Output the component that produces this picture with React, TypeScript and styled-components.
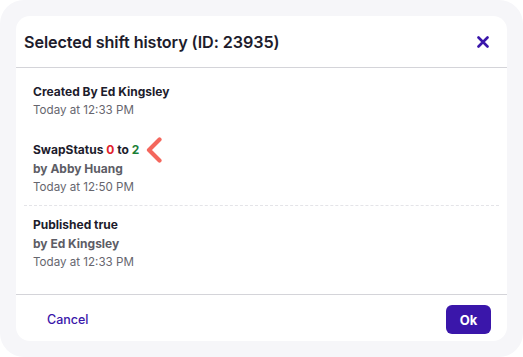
import React from "react";
import styled, { createGlobalStyle } from "styled-components";

const Global = createGlobalStyle`
  html, body { margin: 0; padding: 0; background: #ffffff; }
  body { font-family: Inter, "Noto Sans", sans-serif; -webkit-font-smoothing: antialiased; }
  * { box-sizing: border-box; }
`;

const Backdrop = styled.div`
  width: 523px;
  height: 357px;
  background: #f6f6f9;
  border-radius: 24px;
  padding: 16px;
  display: flex;
`;

const Card = styled.div`
  flex: 1;
  background: #ffffff;
  border-radius: 14px;
  display: flex;
  flex-direction: column;
  overflow: hidden;
`;

const Header = styled.div`
  height: 52px;
  display: flex;
  align-items: center;
  justify-content: space-between;
  padding: 0 17px 0 8px;
  border-bottom: 1px solid #d4d4d9;
`;

const Title = styled.h2`
  margin: 0;
  font-size: 16.2px;
  font-weight: 600;
  color: #1d1c2c;
  letter-spacing: -0.1px;
`;

const CloseButton = styled.button`
  border: none;
  background: none;
  padding: 0;
  width: 14px;
  height: 14px;
  display: flex;
  align-items: center;
  justify-content: center;
  color: #3a16aa;
  cursor: pointer;
`;

const Body = styled.div`
  flex: 1;
  padding: 3px 8px 0;
  display: flex;
  flex-direction: column;
`;

const Entry = styled.div<{ $divided?: boolean; $top: number; $bottom: number }>`
  padding: ${(p) => p.$top}px 9px ${(p) => p.$bottom}px;
  border-bottom: ${(p) => (p.$divided ? "1px dashed #e4e4e8" : "none")};
  display: flex;
  flex-direction: column;
`;

const Headline = styled.div`
  display: flex;
  align-items: center;
  gap: 4px;
  height: 20px;
  font-size: 12px;
  font-weight: 700;
  color: #1d1c2c;
`;

const Value = styled.span<{ $tone: "red" | "green" }>`
  color: ${(p) => (p.$tone === "red" ? "#e2232a" : "#1a7f37")};
`;

const Byline = styled.div`
  height: 19px;
  line-height: 19px;
  font-size: 12px;
  font-weight: 700;
  color: #5d5d66;
`;

const Timestamp = styled.div`
  height: 19px;
  line-height: 19px;
  font-size: 11.6px;
  font-weight: 400;
  color: #66666e;
`;

const Marker = styled.svg`
  margin-left: 3px;
  margin-top: 2px;
`;

const Footer = styled.div`
  height: 47px;
  border-top: 1px solid #d4d4d9;
  display: flex;
  align-items: center;
  justify-content: space-between;
  padding: 0 16px 0 31px;
`;

const TextButton = styled.button`
  border: none;
  background: none;
  padding: 0;
  margin-top: 2px;
  font-family: inherit;
  font-size: 12.5px;
  font-weight: 500;
  color: #3a16aa;
  cursor: pointer;
`;

const PrimaryButton = styled.button`
  border: none;
  width: 45px;
  height: 29px;
  border-radius: 6px;
  background: #3a16aa;
  color: #ffffff;
  font-family: inherit;
  font-size: 13px;
  font-weight: 700;
  cursor: pointer;
  margin-top: 3px;
`;

export default function App() {
  return (
    <>
      <Global />
      <Backdrop>
        <Card>
          <Header>
            <Title>Selected shift history (ID: 23935)</Title>
            <CloseButton aria-label="Close">
              <svg width="12" height="12" viewBox="0 0 12 12">
                <path d="M1.5 1.5 L10.5 10.5 M10.5 1.5 L1.5 10.5" stroke="currentColor" strokeWidth="2.6" strokeLinecap="round" />
              </svg>
            </CloseButton>
          </Header>
          <Body>
            <Entry $top={10} $bottom={10}>
              <Headline>Created By Ed Kingsley</Headline>
              <Timestamp>Today at 12:33 PM</Timestamp>
            </Entry>
            <Entry $top={9} $bottom={8} $divided>
              <Headline>
                <span>
                  SwapStatus <Value $tone="red">0</Value> to <Value $tone="green">2</Value>
                </span>
                <Marker width="16" height="26" viewBox="0 0 16 26">
                  <path d="M13.5 2.5 L3 13 L13.5 23.5" fill="none" stroke="#f4675d" strokeWidth="4.2" strokeLinecap="round" strokeLinejoin="round" />
                </Marker>
              </Headline>
              <Byline>by Abby Huang</Byline>
              <Timestamp>Today at 12:50 PM</Timestamp>
            </Entry>
            <Entry $top={8} $bottom={8}>
              <Headline>Published true</Headline>
              <Byline>by Ed Kingsley</Byline>
              <Timestamp>Today at 12:33 PM</Timestamp>
            </Entry>
          </Body>
          <Footer>
            <TextButton>Cancel</TextButton>
            <PrimaryButton>Ok</PrimaryButton>
          </Footer>
        </Card>
      </Backdrop>
    </>
  );
}
